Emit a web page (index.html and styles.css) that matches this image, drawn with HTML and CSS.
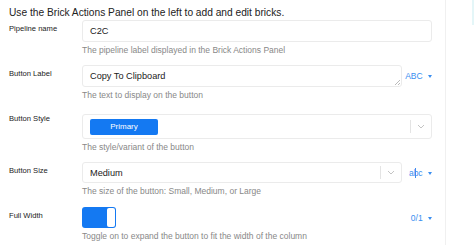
FILE: index.html
```html
<!DOCTYPE html>
<html lang="en">
<head>
  <meta charset="UTF-8">
  <link rel="stylesheet" href="styles.css">
</head>
<body>
  <div class="page">
    <div class="panel">
      <p class="intro">Use the Brick Actions Panel on the left to add and edit bricks.</p>

      <div class="field">
        <label class="field-label">Pipeline name</label>
        <div class="field-body">
          <div class="control-row">
            <div class="input">C2C</div>
          </div>
          <div class="help">The pipeline label displayed in the Brick Actions Panel</div>
        </div>
      </div>

      <div class="field">
        <label class="field-label">Button Label</label>
        <div class="field-body">
          <div class="control-row">
            <div class="input textarea">Copy To Clipboard
              <svg class="grip" width="6" height="6" viewBox="0 0 6 6"><path d="M1 6 L6 1 M4 6 L6 4" stroke="#aaa" stroke-width="0.8"/></svg>
            </div>
            <span class="type-tag">ABC <i class="caret"></i></span>
          </div>
          <div class="help">The text to display on the button</div>
        </div>
      </div>

      <div class="field field-tall">
        <label class="field-label">Button Style</label>
        <div class="field-body">
          <div class="control-row">
            <div class="input select select-tall">
              <span class="chip">Primary</span>
              <span class="select-arrow">
                <svg width="8" height="5" viewBox="0 0 8 5"><polyline points="1,1 4,4 7,1" fill="none" stroke="#c4c4c4" stroke-width="1"/></svg>
              </span>
            </div>
          </div>
          <div class="help">The style/variant of the button</div>
        </div>
      </div>

      <div class="field">
        <label class="field-label">Button Size</label>
        <div class="field-body">
          <div class="control-row">
            <div class="input select">
              <span>Medium</span>
              <span class="select-arrow">
                <svg width="8" height="5" viewBox="0 0 8 5"><polyline points="1,1 4,4 7,1" fill="none" stroke="#c4c4c4" stroke-width="1"/></svg>
              </span>
            </div>
            <span class="type-tag"><span class="abc">abc</span> <i class="caret"></i></span>
          </div>
          <div class="help">The size of the button: Small, Medium, or Large</div>
        </div>
      </div>

      <div class="field field-last">
        <label class="field-label">Full Width</label>
        <div class="field-body">
          <div class="control-row">
            <div class="toggle"><span class="knob"></span></div>
            <span class="spacer"></span>
            <span class="type-tag">0/1 <i class="caret"></i></span>
          </div>
          <div class="help">Toggle on to expand the button to fit the width of the column</div>
        </div>
      </div>
    </div>
    <div class="side">
      <div class="side-box"></div>
    </div>
  </div>
</body>
</html>
```

FILE: styles.css
```css
body {
  margin: 0;
  font-family: "Liberation Sans", Arial, sans-serif;
  color: #333;
  background: #fff;
}
.page {
  display: flex;
  height: 245px;
  overflow: hidden;
}
.panel {
  width: 423px;
  padding: 6px 13px 0 9px;
  border-right: 1px solid #f0f0f0;
  flex: none;
}
.side {
  flex: 1;
  padding-left: 26px;
}
.side-box {
  height: 25px;
  background: #e4f6f8;
}
.intro {
  margin: 0;
  font-size: 10.2px;
  line-height: 14px;
  color: #222;
}
.field {
  display: flex;
  margin-bottom: 9px;
}
.field-tall {
  margin-top: 13px;
}
.field-last {
  margin-top: 10px;
}
.field-label {
  width: 73px;
  flex: none;
  font-size: 7.6px;
  line-height: 10px;
  padding-top: 4px;
  color: #222;
}
.field-tall .field-label {
  padding-top: 0;
}
.field-body {
  flex: 1;
}
.control-row {
  display: flex;
  align-items: center;
}
.input {
  box-sizing: border-box;
  flex: 1;
  height: 22px;
  border: 1px solid #ebebeb;
  border-radius: 3px;
  padding: 0 7px;
  font-size: 9.2px;
  line-height: 20px;
  color: #222;
  position: relative;
}
.textarea .grip {
  position: absolute;
  right: 1px;
  bottom: 1px;
}
.select {
  display: flex;
  align-items: center;
  justify-content: space-between;
  padding-right: 0;
  height: 21px;
}
.select-tall {
  height: 25px;
}
.select-arrow {
  display: flex;
  align-items: center;
  justify-content: center;
  width: 20px;
  height: 13px;
  border-left: 1px solid #e4e4e4;
}
.chip {
  background: #1479f2;
  color: #fff;
  font-size: 8px;
  line-height: 16px;
  width: 68px;
  text-align: center;
  border-radius: 2px;
}
.type-tag {
  width: 30px;
  flex: none;
  text-align: right;
  font-size: 8.5px;
  color: #3a8ef0;
}
.spacer {
  flex: 1;
}
.abc {
  position: relative;
}
.abc::after {
  content: "";
  position: absolute;
  left: 48%;
  top: 0;
  bottom: 0;
  border-left: 1px solid #3a8ef0;
}
.caret {
  display: inline-block;
  width: 0;
  height: 0;
  margin-left: 3px;
  vertical-align: middle;
  border-left: 2.5px solid transparent;
  border-right: 2.5px solid transparent;
  border-top: 3px solid #3a8ef0;
}
.toggle {
  display: flex;
  justify-content: flex-end;
  box-sizing: border-box;
  width: 34px;
  height: 21px;
  background: #1479f2;
  border-radius: 3px;
  padding: 1px;
}
.knob {
  width: 8px;
  background: #fff;
  border-radius: 2px;
}
.help {
  margin-top: 3px;
  font-size: 8.5px;
  line-height: 11px;
  color: #888;
}
```
